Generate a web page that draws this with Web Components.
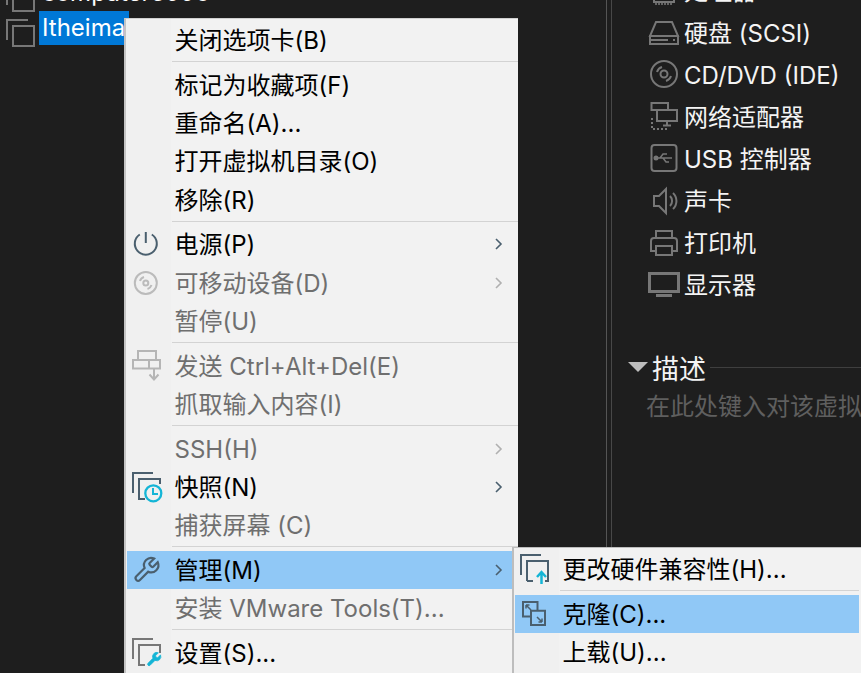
<!DOCTYPE html>
<html lang="zh-CN">
  <head>
    <meta charset="UTF-8" />
    <title>VMware context menu</title>
    <style>
      html, body { margin: 0; height: 100%; background: #1e1e1e; }
      svg { display: block; overflow: visible; }
    </style>
  </head>
  <body>
    <vm-window>
      <tree-pane slot="tree">
        <tree-row>
          <svg slot="icon" width="32" height="32"><path d="M22 2H1v20M7 8v20h21V8z" transform="translate(6 6)" fill="none" stroke="#777" stroke-width="2"/></svg>
          computer3990
        </tree-row>
        <tree-row selected>
          <svg slot="icon" width="32" height="32"><path d="M22 2H1v20M7 8v20h21V8z" transform="translate(6 6)" fill="none" stroke="#777" stroke-width="2"/></svg>
          Itheima
        </tree-row>
      </tree-pane>

      <detail-pane slot="detail">
        <device-row>
          <svg slot="icon" width="32" height="32" fill="none" stroke="#777" stroke-width="2"><path d="M6 10h20v17H6z"/><path d="M8 27v3M11 27v3M14 27v3M17 27v3M20 27v3M23 27v3" stroke-width="1.6"/></svg>
          处理器
        </device-row>
        <device-row>
          <svg slot="icon" width="32" height="32" fill="none" stroke="#777" stroke-width="2"><path d="M8 5h16l6 14H2z"/><path d="M2 19h28v8H2z"/><path d="M3 23h17M25 23h2" stroke="#777" stroke-width="2"/></svg>
          硬盘 (SCSI)
        </device-row>
        <device-row>
          <svg slot="icon" width="32" height="32" fill="none" stroke="#777" stroke-width="2"><circle cx="16" cy="15" r="13"/><circle cx="16" cy="15" r="3.5"/><path d="M9 13a7.5 7.5 0 0 1 5-5M23 17a7.5 7.5 0 0 1-5 5"/></svg>
          CD/DVD (IDE)
        </device-row>
        <device-row>
          <svg slot="icon" width="32" height="32" fill="none" stroke="#777" stroke-width="2"><path d="M9 9H3.500V2H20v7"/><path d="M9 9h20v11H9z"/><path d="M19 20v4M15 24.500h8"/><path d="M4 17v11h16" stroke-dasharray="2 2"/></svg>
          网络适配器
        </device-row>
        <device-row>
          <svg slot="icon" width="32" height="32" fill="none" stroke="#777" stroke-width="2"><rect x="3.500" y="2" width="25" height="26" rx="3"/><path d="M8 15h16M12 15l3-4h4M15 15l3 4h3" stroke-width="1.500"/><circle cx="8" cy="15" r="1.500" fill="#777"/></svg>
          USB 控制器
        </device-row>
        <device-row>
          <svg slot="icon" width="32" height="32" fill="none" stroke="#777" stroke-width="2"><path d="M6 11h5l7-7v24l-7-7H6z"/><path d="M22 11a7 7 0 0 1 0 10M25 8a11 11 0 0 1 0 16"/></svg>
          声卡
        </device-row>
        <device-row>
          <svg slot="icon" width="32" height="32" fill="none" stroke="#777" stroke-width="2"><path d="M8 11V4h16v7"/><path d="M8 24H3V14q0-3 3-3h20q3 0 3 3v10h-5"/><path d="M8 19h16v9H8z"/></svg>
          打印机
        </device-row>
        <device-row>
          <svg slot="icon" width="32" height="32" fill="none" stroke="#777" stroke-width="3"><path d="M1.500 4.500h29v18h-29z"/><path d="M8 26.500h16"/></svg>
          显示器
        </device-row>
        <section-head>描述</section-head>
        <desc-hint>在此处键入对该虚拟机的描述。</desc-hint>
      </detail-pane>

      <ctx-menu slot="menu">
        <menu-item>关闭选项卡(B)</menu-item>
        <menu-sep></menu-sep>
        <menu-item>标记为收藏项(F)</menu-item>
        <menu-item>重命名(A)...</menu-item>
        <menu-item>打开虚拟机目录(O)</menu-item>
        <menu-item>移除(R)</menu-item>
        <menu-sep></menu-sep>
        <menu-item arrow>
          <svg slot="icon" width="32" height="32" fill="none" stroke="#4a5f6e" stroke-width="2"><path d="M8.800 6.500a11 11 0 1 0 12 0M14.800 4v11"/></svg>
          电源(P)
        </menu-item>
        <menu-item arrow disabled>
          <svg slot="icon" width="32" height="32" fill="none" stroke="#bbb" stroke-width="2"><circle cx="14.800" cy="16" r="11"/><circle cx="14.800" cy="16" r="2.500"/><path d="M9 14a6 6 0 0 1 4-4M20.500 18a6 6 0 0 1-4 4"/></svg>
          可移动设备(D)
        </menu-item>
        <menu-item disabled>暂停(U)</menu-item>
        <menu-sep></menu-sep>
        <menu-item disabled>
          <svg slot="icon" width="32" height="32" fill="none" stroke="#b5b5b5" stroke-width="2"><path d="M7 1h18v9H7z"/><path d="M2 10h27v8.500H2zM18 10v8.500"/><path d="M23 18.500V29M18.500 24.500l4.500 5 4.500-5"/></svg>
          发送 Ctrl+Alt+Del(E)
        </menu-item>
        <menu-item disabled>抓取输入内容(I)</menu-item>
        <menu-sep></menu-sep>
        <menu-item arrow disabled>SSH(H)</menu-item>
        <menu-item arrow>
          <svg slot="icon" width="32" height="32" fill="none" stroke="#4a5f6e" stroke-width="2"><path d="M22 2H2v20M8 29V8h21v5"/><path d="M8 28h6"/><circle cx="22.300" cy="22.300" r="8" fill="#f0f0f0" stroke="#14b5d6" stroke-width="2.300"/><path d="M22 17v6h5" stroke="#14b5d6"/></svg>
          快照(N)
        </menu-item>
        <menu-item disabled>捕获屏幕 (C)</menu-item>
        <menu-sep></menu-sep>
        <menu-item arrow active>
          <svg slot="icon" width="32" height="32" fill="none" stroke="#4a5f6e" stroke-width="1.800"><path transform="translate(1 1.500) scale(1.200)" d="M14.700 6.300a1 1 0 0 0 0 1.400l1.600 1.600a1 1 0 0 0 1.400 0l3.770-3.770a6 6 0 0 1-7.940 7.940l-6.910 6.910a2.120 2.120 0 0 1-3-3l6.910-6.910a6 6 0 0 1 7.940-7.940l-3.760 3.760z"/></svg>
          管理(M)
        </menu-item>
        <menu-item disabled>安装 VMware Tools(T)...</menu-item>
        <menu-sep></menu-sep>
        <menu-item>
          <svg slot="icon" width="32" height="32" fill="none" stroke="#777" stroke-width="2"><path d="M22 2H2v20M8 29V8h21v8M8 28h6"/><path transform="translate(14.500 14) scale(.7)" d="M14.700 6.300a1 1 0 0 0 0 1.400l1.600 1.600a1 1 0 0 0 1.400 0l3.770-3.770a6 6 0 0 1-7.940 7.940l-6.910 6.910a2.120 2.120 0 0 1-3-3l6.910-6.910a6 6 0 0 1 7.940-7.940l-3.760 3.760z" fill="#14b5d6" stroke="#14b5d6" stroke-width="1"/></svg>
          设置(S)...
        </menu-item>
      </ctx-menu>

      <ctx-menu slot="menu" sub>
        <menu-item>
          <svg slot="icon" width="32" height="32" fill="none" stroke="#4a5f6e" stroke-width="2"><path d="M22 2H2v20M8 28V8h21v20h-3M8 28h6"/><path d="M22.500 31V20M18 24l4.500-5 4.500 5" stroke="#14b5d6" stroke-width="2.500"/></svg>
          更改硬件兼容性(H)...
        </menu-item>
        <menu-sep></menu-sep>
        <menu-item active>
          <svg slot="icon" width="32" height="32" fill="none" stroke="#4a5f6e" stroke-width="2"><path d="M12 18.500H4V4h14.500v8.500"/><path d="M12 12.700h14V27H12z"/><path d="M7 7l5 5M7 7h3.500M7 7v3.500M23 24l-5-5M23 24h-3.500M23 24v-3.500" stroke-width="1.500"/></svg>
          克隆(C)...
        </menu-item>
        <menu-item>上载(U)...</menu-item>
      </ctx-menu>
    </vm-window>

    <script>
      // Shared text font for everything in the window
      const FONT = `Inter, "Noto Sans CJK SC", sans-serif`;

      // Small helper: a class with an open shadow root from a markup string
      function register(name, markup) {
        customElements.define(name, class extends HTMLElement {
          constructor() {
            super();
            const shadow = this.attachShadow({ mode: "open" });
            const template = document.createElement("template");
            template.innerHTML = markup;
            shadow.appendChild(template.content.cloneNode(true));
          }
        });
      }

      register("vm-window", `
        <style>
          :host { display: flex; position: relative; width: 861px; height: 673px; overflow: hidden;
            background: #1e1e1e; font: 24px/34px ${FONT}; color: #fff; }
          .left { width: 606px; flex: none; }
          .splitter { width: 4px; flex: none; border-left: 1px solid #555; border-right: 1px solid #484848; }
          .right { flex: 1; min-width: 0; }
        </style>
        <div class="left"><slot name="tree"></slot></div>
        <div class="splitter"></div>
        <div class="right"><slot name="detail"></slot></div>
        <slot name="menu"></slot>
      `);

      register("tree-pane", `
        <style>:host { display: block; margin-top: -25px; }</style>
        <slot></slot>
      `);

      register("tree-row", `
        <style>
          :host { display: flex; height: 35px; align-items: center; }
          .icon { width: 32px; height: 32px; margin-right: 7px; flex: none; }
          .text { padding: 0 3px; height: 34px; line-height: 34px; white-space: nowrap; }
          :host([selected]) .text { background: #0078d7; width: 84px; }
        </style>
        <span class="icon"><slot name="icon"></slot></span>
        <span class="text"><slot></slot></span>
      `);

      register("detail-pane", `
        <style>:host { display: block; margin-top: -30px; padding-left: 36px; white-space: nowrap; overflow: hidden; }</style>
        <slot></slot>
      `);

      register("device-row", `
        <style>
          :host { display: flex; height: 42px; align-items: center; gap: 4px; color: #f4f4f4; }
          .icon { width: 32px; height: 32px; flex: none; }
          .text { margin-top: 2px; }
        </style>
        <span class="icon"><slot name="icon"></slot></span>
        <span class="text"><slot></slot></span>
      `);

      register("section-head", `
        <style>
          :host { display: flex; align-items: center; height: 40px; margin: 43px 0 0 -20px; font-size: 27px; color: #f4f4f4; }
          i { width: 0; height: 0; flex: none; border: 10px solid transparent; border-bottom: 0; border-top-color: #bdbdbd; margin: -4px 4px 0 0; }
          span { margin-top: 2px; }
          .rule { flex: 1; height: 1px; background: #3f3f3f; margin: -4px 0 0 4px; }
        </style>
        <i></i><span><slot></slot></span><div class="rule"></div>
      `);

      register("desc-hint", `
        <style>:host { display: block; margin: 1px 0 0 -2px; color: #5f5f5f; line-height: 34px; }</style>
        <slot></slot>
      `);

      // Floating menu, the submenu variant sits further down and to the right
      register("ctx-menu", `
        <style>
          :host { position: absolute; left: 124px; top: 18px; width: 394px; height: 680px; box-sizing: border-box;
            padding: 2px 0 0 2px; border-left: 2px solid #c4c4c4; border-top: 1px solid #d0d0d0;
            background: linear-gradient(90deg, #f0f0f0 45px, #f2f2f2 45px); color: #000; }
          :host([sub]) { left: 512px; top: 547px; width: 349px; padding: 2px 2px 0 2px; border-top-color: #bdbdbd; border-left-color: #bdbdbd; }
        </style>
        <slot></slot>
      `);

      register("menu-item", `
        <style>
          :host { display: flex; align-items: center; height: 38.250px; padding-left: 4px; margin-left: -1px; line-height: 34px; white-space: nowrap; color: #000; position: relative; }
          :host([disabled]) { color: #6f6f6f; }
          :host([active]) { background: #90c8f6; }
          .icon { width: 32px; height: 32px; margin-right: 11.500px; flex: none; }
          .text { margin-top: 2px; }
          .arrow { display: none; position: absolute; right: 14px; top: 50%; margin-top: -7px; }
          :host([arrow]) .arrow { display: block; }
          :host([disabled]) .arrow path { stroke: #b0b0b0; }
        </style>
        <span class="icon"><slot name="icon"></slot></span>
        <span class="text"><slot></slot></span>
        <svg class="arrow" width="10" height="14" fill="none"><path d="M2 2l5 5-5 5" stroke="#4a5f6e" stroke-width="1.600"/></svg>
      `);

      register("menu-sep", `
        <style>
          :host { display: block; height: 6.500px; margin-left: 44px; box-sizing: border-box; padding-top: 2px; }
          div { height: 1px; background: #d3d3d3; }
        </style>
        <div></div>
      `);
    </script>
  </body>
</html>
